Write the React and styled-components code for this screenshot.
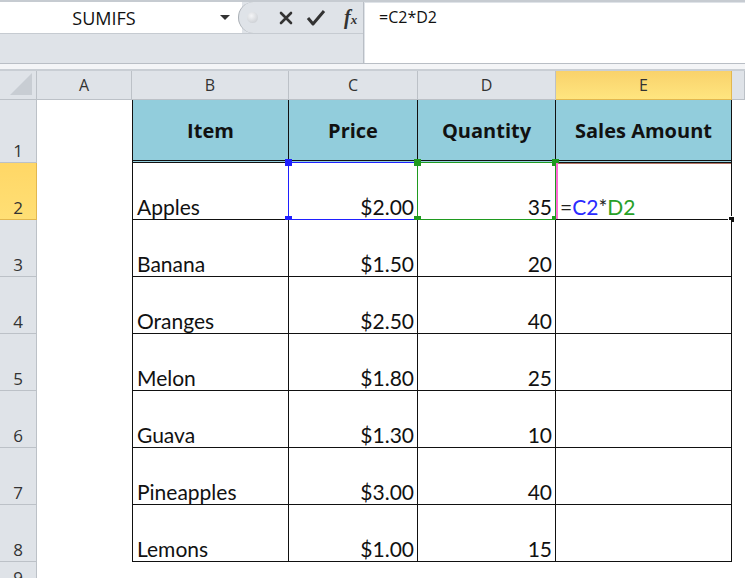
import React from "react";
import styled, { createGlobalStyle } from "styled-components";

const GlobalStyle = createGlobalStyle`
  html, body {
    margin: 0;
    padding: 0;
    background: #fff;
    overflow: hidden;
  }
  body {
    font-family: "Lato", "Open Sans", sans-serif;
    width: 745px;
    height: 578px;
  }
`;

const columns = ["A", "B", "C", "D", "E", ""];

const rows = [
  { item: "Apples", price: "$2.00", qty: "35" },
  { item: "Banana", price: "$1.50", qty: "20" },
  { item: "Oranges", price: "$2.50", qty: "40" },
  { item: "Melon", price: "$1.80", qty: "25" },
  { item: "Guava", price: "$1.30", qty: "10" },
  { item: "Pineapples", price: "$3.00", qty: "40" },
  { item: "Lemons", price: "$1.00", qty: "15" },
];

function RefBox({ color }) {
  return (
    <RefFrame $color={color}>
      <Handle $color={color} $top $left />
      <Handle $color={color} $top />
      <Handle $color={color} $left />
      <Handle $color={color} />
    </RefFrame>
  );
}

export default function App() {
  return (
    <>
      <GlobalStyle />
      <FormulaBar>
        <LeftPane>
          <TopStrip>
            <NameBox>
              <NameText>SUMIFS</NameText>
              <DropArrow />
            </NameBox>
            <ButtonGroup>
              <Knob />
              <IconButton>
                <svg width="16" height="16" viewBox="0 0 16 16">
                  <path d="M3 3 L13 13 M13 3 L3 13" stroke="#333" strokeWidth="2.6" strokeLinecap="round" />
                </svg>
              </IconButton>
              <IconButton>
                <svg width="20" height="18" viewBox="0 0 20 18">
                  <path d="M2 9 L7 15 L18 2" stroke="#333" strokeWidth="3" fill="none" strokeLinejoin="round" />
                </svg>
              </IconButton>
              <Fx>
                f<sub>x</sub>
              </Fx>
            </ButtonGroup>
          </TopStrip>
        </LeftPane>
        <FormulaInput>=C2*D2</FormulaInput>
      </FormulaBar>
      <Divider />
      <Sheet>
        <Corner>
          <svg width="22" height="22" viewBox="0 0 22 22">
            <polygon points="22,0 22,22 0,22" fill="#c8cdd3" />
          </svg>
        </Corner>
        {columns.map((c, i) => (
          <ColHeader key={i} $active={c === "E"}>
            {c}
          </ColHeader>
        ))}

        <RowHeader>1</RowHeader>
        <Cell />
        <HeadCell $first>Item</HeadCell>
        <HeadCell>Price</HeadCell>
        <HeadCell>Quantity</HeadCell>
        <HeadCell>Sales Amount</HeadCell>
        <Cell />

        {rows.map((r, i) => {
          const n = i + 2;
          const first = i === 0;
          return (
            <React.Fragment key={r.item}>
              <RowHeader $active={first}>{n}</RowHeader>
              <Cell />
              <DataCell $first>{r.item}</DataCell>
              <DataCell $right>
                {r.price}
                {first && <RefBox color="#1f1fff" />}
              </DataCell>
              <DataCell $right>
                {r.qty}
                {first && <RefBox color="#1f9a1f" />}
              </DataCell>
              <DataCell $editing={first}>
                {first && (
                  <>
                    <Op>=</Op>
                    <RefText $color="#2a2aff">C2</RefText>
                    <Op>*</Op>
                    <RefText $color="#27a027">D2</RefText>
                    <FillHandle />
                  </>
                )}
              </DataCell>
              <Cell />
            </React.Fragment>
          );
        })}

        <RowHeader $short>9</RowHeader>
        <Cell />
        <Cell />
        <Cell />
        <Cell />
        <Cell />
        <Cell />
      </Sheet>
    </>
  );
}

const FormulaBar = styled.div`
  display: flex;
  height: 64px;
  background: #dfe3e8;
  border-top: 2px solid #c6cbd1;
  box-sizing: border-box;
  border-bottom: 1px solid #b9bec5;
`;

const LeftPane = styled.div`
  width: 364px;
  display: flex;
  flex-direction: column;
  border-right: 1px solid #b9bec5;
  box-sizing: border-box;
`;

const TopStrip = styled.div`
  display: flex;
  height: 31px;
  border-bottom: 1px solid #c6cbd1;
`;

const NameBox = styled.div`
  width: 242px;
  background: #fff;
  display: flex;
  align-items: center;
`;

const NameText = styled.span`
  flex: 1;
  text-align: center;
  font-family: "Open Sans", "Lato", sans-serif;
  font-size: 18px;
  color: #111;
  padding-right: 12px;
`;

const DropArrow = styled.span`
  width: 0;
  height: 0;
  border-left: 5px solid transparent;
  border-right: 5px solid transparent;
  border-top: 5px solid #333;
  margin-right: 12px;
`;

const ButtonGroup = styled.div`
  flex: 1;
  display: flex;
  align-items: center;
  background: #dfe3e8;
  border-left: 1px solid #a9aeb4;
  border-radius: 16px 0 0 16px;
  margin-left: -4px;
  padding-left: 8px;
  gap: 10px;
`;

const Knob = styled.span`
  width: 11px;
  height: 11px;
  border-radius: 50%;
  background: radial-gradient(circle at 40% 35%, #f4f5f7, #c3c7cc);
  margin-right: 8px;
`;

const IconButton = styled.span`
  display: flex;
  align-items: center;
  justify-content: center;
  width: 20px;
`;

const Fx = styled.span`
  font-family: "Liberation Serif", serif;
  font-style: italic;
  font-weight: bold;
  font-size: 20px;
  color: #333;
  margin-left: 8px;

  sub {
    font-size: 13px;
    vertical-align: 0;
  }
`;

const FormulaInput = styled.div`
  flex: 1;
  background: #fff;
  margin-top: 1px;
  margin-left: 1px;
  padding: 3px 0 0 14px;
  font-family: "Open Sans", "Lato", sans-serif;
  font-size: 16px;
  color: #111;
`;

const Divider = styled.div`
  height: 5px;
  background: #f4f5f7;
  border-bottom: 2px solid #c9ced4;
`;

const Sheet = styled.div`
  display: grid;
  grid-template-columns: 37px 95px 157px 129px 138px 176px 1fr;
  grid-template-rows: 29px 63px repeat(7, 57px) 20px;
`;

const Corner = styled.div`
  background: #dfe3e8;
  border-right: 1px solid #bcc1c7;
  border-bottom: 1px solid #bcc1c7;
  display: flex;
  align-items: flex-end;
  justify-content: flex-end;
  padding: 0 4px 4px 0;
  box-sizing: border-box;
`;

const ColHeader = styled.div`
  background: ${({ $active }) =>
    $active ? "linear-gradient(#f9d26b, #ffe57f)" : "#dfe3e8"};
  border-right: 1px solid ${({ $active }) => ($active ? "#e2b74f" : "#bcc1c7")};
  border-bottom: 1px solid ${({ $active }) => ($active ? "#e2b74f" : "#bcc1c7")};
  display: flex;
  align-items: center;
  justify-content: center;
  font-family: "Open Sans", "Lato", sans-serif;
  font-size: 16px;
  color: #333;
  box-sizing: border-box;
`;

const RowHeader = styled.div`
  background: ${({ $active }) =>
    $active ? "linear-gradient(#ffd766, #ffdf75)" : "#dfe3e8"};
  border-right: 1px solid ${({ $active }) => ($active ? "#e2b74f" : "#bcc1c7")};
  border-bottom: 1px solid ${({ $active }) => ($active ? "#e2b74f" : "#bcc1c7")};
  display: flex;
  align-items: ${({ $short }) => ($short ? "flex-start" : "flex-end")};
  justify-content: center;
  padding: ${({ $short }) => ($short ? "7px 0 0" : "0 0 3px")};
  font-family: "Open Sans", "Lato", sans-serif;
  font-size: 17px;
  line-height: 1;
  color: #333;
  overflow: hidden;
  box-sizing: border-box;
`;

const Cell = styled.div`
  background: #fff;
`;

const HeadCell = styled.div`
  background: #92cddc;
  border-right: 1px solid #111;
  border-left: ${({ $first }) => ($first ? "1px solid #111" : "none")};
  border-bottom: 3px double #111;
  display: flex;
  align-items: center;
  justify-content: center;
  font-family: "Open Sans", "Lato", sans-serif;
  font-weight: 700;
  font-size: 20px;
  color: #111;
  padding-top: 1px;
  box-sizing: border-box;
`;

const DataCell = styled.div`
  position: relative;
  background: #fff;
  border-right: 1px solid #111;
  border-left: ${({ $first }) => ($first ? "1px solid #111" : "none")};
  border-bottom: 1px solid #111;
  box-shadow: ${({ $editing }) =>
    $editing ? "inset 2px 0 0 #ff6ad5, inset 0 1px 0 #b07060" : "none"};
  display: flex;
  align-items: flex-end;
  justify-content: ${({ $right }) => ($right ? "flex-end" : "flex-start")};
  padding: 0 3px 0 4px;
  font-size: 21px;
  line-height: 25px;
  color: #111;
  box-sizing: border-box;
`;

const RefFrame = styled.span`
  position: absolute;
  top: -1px;
  left: -1px;
  right: -1px;
  bottom: -1px;
  border: 1px solid ${({ $color }) => $color};
  pointer-events: none;
`;

const Handle = styled.span`
  position: absolute;
  width: 7px;
  height: 7px;
  background: ${({ $color }) => $color};
  ${({ $top }) => ($top ? "top: -4px;" : "bottom: -4px;")}
  ${({ $left }) => ($left ? "left: -4px;" : "right: -4px;")}
`;

const Op = styled.span`
  color: #222;
`;

const RefText = styled.span`
  color: ${({ $color }) => $color};
`;

const FillHandle = styled.span`
  position: absolute;
  right: -4px;
  bottom: -4px;
  width: 5px;
  height: 5px;
  background: #111;
  border: 1px solid #fff;
`;
